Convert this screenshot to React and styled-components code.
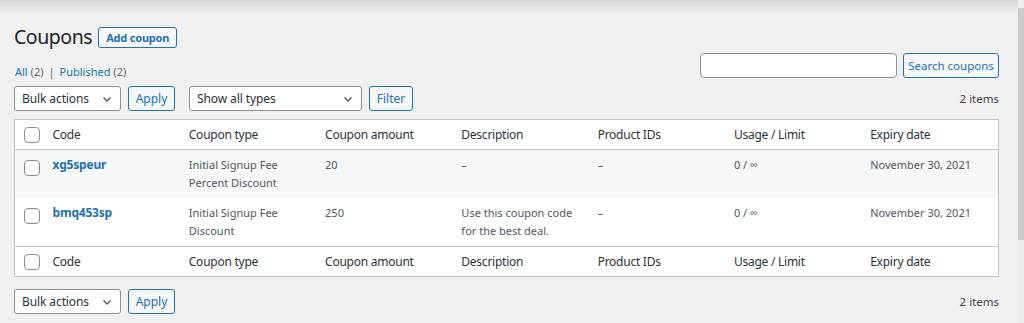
import styled, { createGlobalStyle } from "styled-components";

const GlobalStyle = createGlobalStyle`
  html, body { margin: 0; padding: 0; }
  body {
    background: #f0f0f1;
    font-family: "Noto Sans", "Open Sans", sans-serif;
    color: #3c434a;
  }
`;

const Page = styled.div`
  display: flex;
  height: 323px;
  overflow: hidden;
`;

const Main = styled.div`
  flex: 1;
  padding: 0 19px 0 14px;
  background: linear-gradient(to bottom, #d8d8d8 0, #f0f0f1 14px);
`;

const ScrollTrack = styled.div`
  width: 6px;
  background: #eeeeee;
  padding-top: 8px;
`;

const ScrollThumb = styled.div`
  height: 232px;
  background: #c9c9c9;
`;

const TitleRow = styled.div`
  display: flex;
  align-items: center;
  gap: 6px;
  padding-top: 26px;
  height: 22px;
`;

const Title = styled.h1`
  margin: 0;
  font-size: 19.5px;
  letter-spacing: -0.45px;
  font-weight: 400;
  color: #1d2327;
  line-height: 22px;
`;

const OutlineButton = styled.button`
  font-family: inherit;
  font-size: ${(p) => p.$fs || 11.5}px;
  font-weight: ${(p) => (p.$bold ? 700 : 400)};
  letter-spacing: ${(p) => (p.$bold ? "-0.2px" : "0")};
  color: #2271b1;
  background: #f6f7f7;
  border: 1px solid #2271b1;
  border-radius: 3px;
  height: ${(p) => p.$h || 24}px;
  width: ${(p) => p.$w}px;
  padding: 0;
  line-height: 1;
  cursor: pointer;
`;

const ViewRow = styled.div`
  display: flex;
  justify-content: space-between;
  align-items: flex-start;
  margin-top: 5px;
`;

const Views = styled.div`
  font-size: 11px;
  padding-top: 11px;
  padding-left: 1px;
  color: #646970;
  a { color: #2271b1; text-decoration: none; }
  span.sep { margin: 0 5px; }
`;

const SearchBox = styled.div`
  display: flex;
  gap: 6px;
`;

const SearchInput = styled.input`
  width: 197px;
  height: 25px;
  box-sizing: border-box;
  border: 1px solid #8c8f94;
  border-radius: 4px;
  background: #fff;
`;

const Tablenav = styled.div`
  display: flex;
  align-items: center;
  gap: 7px;
  margin: ${(p) => p.$m};
  height: 25px;
`;

const Select = styled.div`
  display: flex;
  align-items: center;
  justify-content: space-between;
  box-sizing: border-box;
  width: ${(p) => p.$w}px;
  height: 25px;
  padding: 0 7px 0 7px;
  background: #fff;
  border: 1px solid #8c8f94;
  border-radius: 3px;
  font-size: 12px;
  letter-spacing: -0.1px;
  color: #2c3338;
  margin-left: ${(p) => p.$ml || 0}px;
`;

const Count = styled.div`
  margin-left: auto;
  font-size: 11.5px;
  color: #3c434a;
`;

const Table = styled.table`
  width: 100%;
  table-layout: fixed;
  border-collapse: collapse;
  background: #fff;
  border: 1px solid #c3c4c7;
`;

const HeadCell = styled.th`
  text-align: left;
  font-weight: 400;
  font-size: 12px;
  letter-spacing: -0.25px;
  color: #2c3338;
  padding: 0 8px;
  height: 29px;
  border-bottom: ${(p) => (p.$foot ? "none" : "1px solid #c3c4c7")};
  border-top: ${(p) => (p.$foot ? "1px solid #c3c4c7" : "none")};
`;

const Row = styled.tr`
  background: ${(p) => (p.$alt ? "#f6f7f7" : "#fff")};
`;

const Cell = styled.td`
  vertical-align: top;
  font-size: 11px;
  line-height: 18px;
  color: #50575e;
  padding: 6px 8px 0;
  height: 42px;
`;

const CheckCell = styled.td`
  vertical-align: top;
  padding: 10px 0 0 9px;
`;

const CheckHead = styled.th`
  padding: 0 0 0 9px;
  text-align: left;
  border-bottom: ${(p) => (p.$foot ? "none" : "1px solid #c3c4c7")};
  border-top: ${(p) => (p.$foot ? "1px solid #c3c4c7" : "none")};
`;

const Box = styled.span`
  display: block;
  width: 14px;
  height: 14px;
  border: 1px solid #8c8f94;
  border-radius: 4px;
  background: #fff;
`;

const CodeLink = styled.a`
  font-size: 12px;
  font-weight: 700;
  letter-spacing: -0.2px;
  color: #2271b1;
  text-decoration: none;
`;

const Chevron = () => (
  <svg width="12" height="12" viewBox="0 0 12 12" fill="none">
    <path d="M2.5 4.5 6 8l3.5-3.5" stroke="#50575e" strokeWidth="1.4" />
  </svg>
);

const columns = ["Code", "Coupon type", "Coupon amount", "Description", "Product IDs", "Usage / Limit", "Expiry date"];

const coupons = [
  { code: "xg5speur", type: ["Initial Signup Fee", "Percent Discount"], amount: "20", desc: ["–"], ids: "–", usage: "0 / ∞", expiry: "November 30, 2021" },
  { code: "bmq453sp", type: ["Initial Signup Fee", "Discount"], amount: "250", desc: ["Use this coupon code", "for the best deal."], ids: "–", usage: "0 / ∞", expiry: "November 30, 2021" },
];

function HeaderRow({ foot }) {
  return (
    <tr>
      <CheckHead $foot={foot}><Box /></CheckHead>
      {columns.map((c) => (
        <HeadCell key={c} $foot={foot}>{c}</HeadCell>
      ))}
    </tr>
  );
}

function BulkBar({ m, last }) {
  return (
    <Tablenav $m={m}>
      <Select $w={107}>Bulk actions <Chevron /></Select>
      <OutlineButton $w={47} $h={25} $fs={12}>Apply</OutlineButton>
      {!last && (
        <>
          <Select $w={173} $ml={7}>Show all types <Chevron /></Select>
          <OutlineButton $w={44} $h={25} $fs={12}>Filter</OutlineButton>
        </>
      )}
      <Count>2 items</Count>
    </Tablenav>
  );
}

export default function App() {
  return (
    <>
      <GlobalStyle />
      <Page>
        <Main>
          <TitleRow>
            <Title>Coupons</Title>
            <OutlineButton $bold $fs={11} $h={21} $w={79}>Add coupon</OutlineButton>
          </TitleRow>
          <ViewRow>
            <Views>
              <a href="#all">All</a> (2)<span className="sep">|</span>
              <a href="#pub">Published</a> (2)
            </Views>
            <SearchBox>
              <SearchInput />
              <OutlineButton $w={96} $h={25} $fs={11.5}>Search coupons</OutlineButton>
            </SearchBox>
          </ViewRow>
          <BulkBar m="7px 0 8px" />
          <Table>
            <colgroup>
              <col style={{ width: 30 }} />
              {columns.map((c) => <col key={c} />)}
            </colgroup>
            <thead><HeaderRow /></thead>
            <tbody>
              {coupons.map((c, i) => (
                <Row key={c.code} $alt={i === 0}>
                  <CheckCell><Box /></CheckCell>
                  <Cell><CodeLink href="#c">{c.code}</CodeLink></Cell>
                  <Cell>{c.type.map((t) => <div key={t}>{t}</div>)}</Cell>
                  <Cell>{c.amount}</Cell>
                  <Cell>{c.desc.map((t) => <div key={t}>{t}</div>)}</Cell>
                  <Cell>{c.ids}</Cell>
                  <Cell>{c.usage}</Cell>
                  <Cell>{c.expiry}</Cell>
                </Row>
              ))}
            </tbody>
            <tfoot><HeaderRow foot /></tfoot>
          </Table>
          <BulkBar m="12px 0 0" last />
        </Main>
        <ScrollTrack><ScrollThumb /></ScrollTrack>
      </Page>
    </>
  );
}
